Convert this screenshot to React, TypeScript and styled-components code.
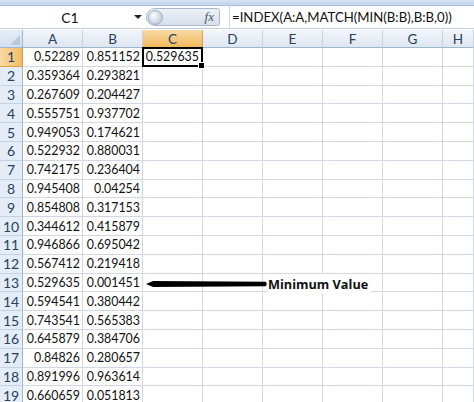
import React from "react";
import styled, { createGlobalStyle } from "styled-components";

const Global = createGlobalStyle`
  html, body { margin: 0; padding: 0; background: #fff; overflow: hidden; }
  body { font-family: Lato, "Open Sans", "Liberation Sans", sans-serif; }
`;

const ROW_H = 18.8;

const rows: [string, string][] = [
  ["0.52289", "0.851152"],
  ["0.359364", "0.293821"],
  ["0.267609", "0.204427"],
  ["0.555751", "0.937702"],
  ["0.949053", "0.174621"],
  ["0.522932", "0.880031"],
  ["0.742175", "0.236404"],
  ["0.945408", "0.04254"],
  ["0.854808", "0.317153"],
  ["0.344612", "0.415879"],
  ["0.946866", "0.695042"],
  ["0.567412", "0.219418"],
  ["0.529635", "0.001451"],
  ["0.594541", "0.380442"],
  ["0.743541", "0.565383"],
  ["0.645879", "0.384706"],
  ["0.84826", "0.280657"],
  ["0.891996", "0.963614"],
  ["0.660659", "0.051813"],
];

const columns = ["A", "B", "C", "D", "E", "F", "G", "H"];

/* ─── Window chrome ─────────────────────────────────── */
const Screen = styled.div`
  width: 474px;
  height: 402px;
  overflow: hidden;
  position: relative;
  background: #fff;
`;

const RibbonEdge = styled.div`
  height: 5px;
  background: linear-gradient(#d5e2f3, #c4d6ee);
  border-bottom: 1px solid #a9c1e0;
`;

const FormulaBar = styled.div`
  display: flex;
  align-items: center;
  height: 22px;
  background: #fff;
  border-bottom: 1px solid #c3cfdf;
  margin-bottom: 1px;
`;

const NameBox = styled.div`
  width: 146px;
  display: flex;
  align-items: center;
  font-size: 14px;
  color: #111;
`;

const NameText = styled.span`
  flex: 1;
  text-align: center;
  padding-left: 6px;
`;

const DropArrow = styled.span`
  width: 0;
  height: 0;
  border-left: 4px solid transparent;
  border-right: 4px solid transparent;
  border-top: 4px solid #222;
  margin-right: 4px;
`;

const Pill = styled.div`
  width: 74px;
  height: 18px;
  border: 1px solid #a8b8cc;
  border-radius: 10px 3px 3px 10px;
  background: linear-gradient(#eef2f8, #d6dfeb);
  display: flex;
  align-items: center;
  justify-content: space-between;
  box-sizing: border-box;
`;

const Knob = styled.span`
  width: 15px;
  height: 15px;
  margin-left: 1px;
  border-radius: 50%;
  border: 1px solid #9fb0c6;
  background: radial-gradient(circle at 35% 35%, #ffffff, #c4cfdd 70%);
  box-sizing: border-box;
`;

const Fx = styled.span`
  font-family: "Liberation Serif", serif;
  font-style: italic;
  font-size: 13px;
  color: #555;
  margin-right: 5px;
`;

const FormulaText = styled.div`
  margin-left: 9px;
  font-size: 13.2px;
  color: #111;
  white-space: nowrap;
  border-left: 1px solid #d0d8e4;
  padding-left: 2px;
  height: 22px;
  line-height: 22px;
`;

/* ─── Sheet grid ────────────────────────────────────── */
const Sheet = styled.div`
  display: grid;
  grid-template-columns: 23px repeat(7, 60px) 1fr;
  grid-auto-rows: ${ROW_H}px;
  grid-template-rows: 18px;
  font-size: 12.4px;
  color: #111;
`;

const Corner = styled.div`
  background: linear-gradient(#e6edf7, #d3def0);
  border-right: 1px solid #9eb6ce;
  border-bottom: 1px solid #9eb6ce;
  position: relative;
  box-sizing: border-box;
  &::after {
    content: "";
    position: absolute;
    right: 2px;
    bottom: 2px;
    border-left: 10px solid transparent;
    border-bottom: 10px solid #b7c9df;
  }
`;

const ColHead = styled.div<{ $active?: boolean }>`
  display: flex;
  align-items: center;
  justify-content: center;
  box-sizing: border-box;
  font-size: 13.5px;
  color: #27415f;
  background: ${(p) =>
    p.$active ? "linear-gradient(#f9d9a5, #f1b95f)" : "linear-gradient(#f3f6fb, #dee6f1)"};
  border-right: 1px solid ${(p) => (p.$active ? "#e0a040" : "#c5d2e2")};
  border-bottom: 1px solid ${(p) => (p.$active ? "#e39a38" : "#9eb6ce")};
`;

const RowHead = styled.div<{ $active?: boolean }>`
  display: flex;
  align-items: center;
  justify-content: center;
  box-sizing: border-box;
  font-size: 14px;
  color: #27415f;
  background: ${(p) => (p.$active ? "linear-gradient(90deg, #f9d9a5, #f1bc66)" : "#e4ecf7")};
  border-right: 1px solid ${(p) => (p.$active ? "#e39a38" : "#9eb6ce")};
  border-bottom: 1px solid ${(p) => (p.$active ? "#e0a040" : "#c5d2e2")};
`;

const Cell = styled.div<{ $selected?: boolean }>`
  box-sizing: border-box;
  display: flex;
  align-items: center;
  justify-content: flex-end;
  padding-right: 2px;
  white-space: nowrap;
  border-right: 1px solid #d0d7e5;
  border-bottom: 1px solid #d0d7e5;
  position: relative;
  ${(p) =>
    p.$selected &&
    `
    border: 2px solid #000;
    margin: -1px 0 0 -1px;
    width: calc(100% + 1px);
    &::after {
      content: "";
      position: absolute;
      right: -4px;
      bottom: -4px;
      width: 5px;
      height: 5px;
      background: #000;
      border: 1px solid #fff;
      z-index: 2;
    }
  `}
`;

/* ─── Annotation ────────────────────────────────────── */
const Annotation = styled.div`
  position: absolute;
  left: 144px;
  top: 274px;
  display: flex;
  align-items: center;
  height: 20px;
`;

const Label = styled.span`
  background: #fff;
  font-family: "Open Sans", Lato, sans-serif;
  font-weight: 700;
  font-size: 12.7px;
  color: #111;
  padding: 1px 3px 1px 1px;
  margin-left: -1px;
`;

function Arrow() {
  return (
    <svg width="124" height="10" viewBox="0 0 124 10">
      <path d="M2 5 L9 2 L122 2.8 Q123.5 5 122 7.2 L9 8 Z" fill="#000" />
    </svg>
  );
}

export default function App() {
  return (
    <Screen>
      <Global />
      <RibbonEdge />
      <FormulaBar>
        <NameBox>
          <NameText>C1</NameText>
          <DropArrow />
        </NameBox>
        <Pill>
          <Knob />
          <Fx>fx</Fx>
        </Pill>
        <FormulaText>=INDEX(A:A,MATCH(MIN(B:B),B:B,0))</FormulaText>
      </FormulaBar>

      <Sheet>
        <Corner />
        {columns.map((c) => (
          <ColHead key={c} $active={c === "C"}>
            {c}
          </ColHead>
        ))}
        {rows.map(([a, b], i) => (
          <React.Fragment key={i}>
            <RowHead $active={i === 0}>{i + 1}</RowHead>
            <Cell>{a}</Cell>
            <Cell>{b}</Cell>
            <Cell $selected={i === 0}>{i === 0 ? "0.529635" : ""}</Cell>
            <Cell />
            <Cell />
            <Cell />
            <Cell />
            <Cell />
          </React.Fragment>
        ))}
      </Sheet>

      <Annotation>
        <Arrow />
        <Label>Minimum Value</Label>
      </Annotation>
    </Screen>
  );
}
